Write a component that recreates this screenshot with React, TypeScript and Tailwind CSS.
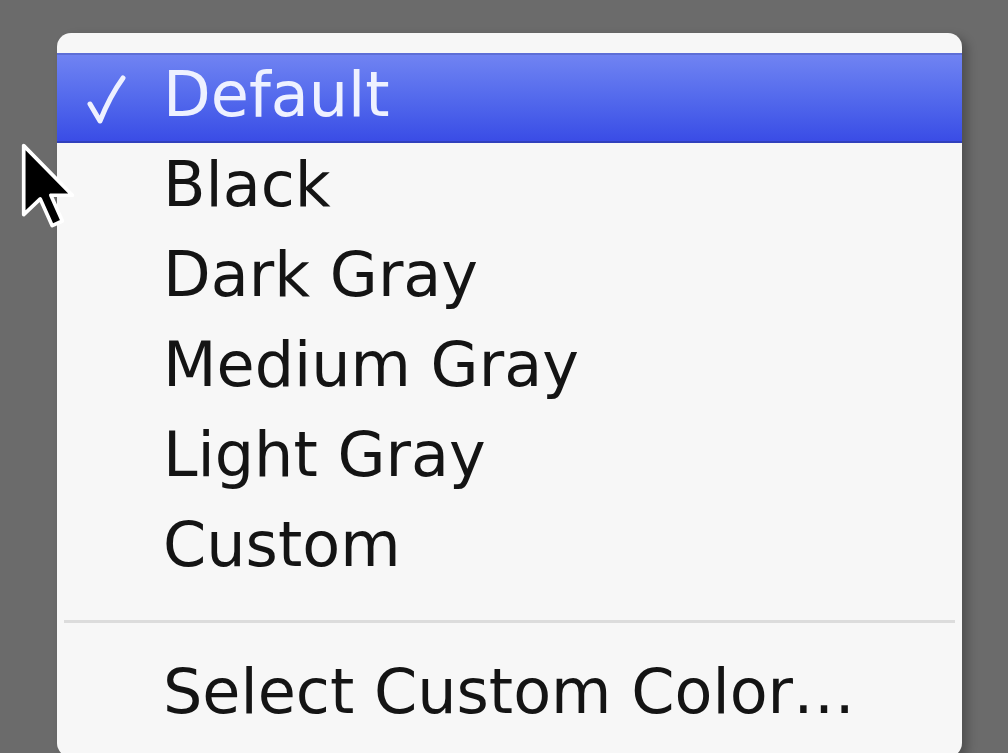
import React from 'react';

const items = ['Black', 'Dark Gray', 'Medium Gray', 'Light Gray', 'Custom'];

function ArrowCursor() {
    return (
        <svg
            className="absolute left-[19px] top-[141px]"
            width="60"
            height="92"
            viewBox="0 0 13 20"
        >
            <path
                d="M1 1 L1 16 L4.6 12.6 L7.2 18.4 L9.4 17.4 L6.9 11.8 L11.6 11.8 Z"
                fill="#000"
                stroke="#fff"
                strokeWidth="0.8"
                strokeLinejoin="round"
            />
        </svg>
    );
}

function CheckMark() {
    return (
        <svg width="40" height="54" viewBox="0 0 40 54" className="mt-[6px]">
            <path
                d="M4 30 L14 47 Q24 22 37 4"
                fill="none"
                stroke="#eef1ff"
                strokeWidth="5"
                strokeLinecap="round"
                strokeLinejoin="round"
            />
        </svg>
    );
}

export default function App() {
    return (
        <div
            className="relative w-[1008px] h-[753px] overflow-hidden bg-[#6b6b6b]"
            style={{ fontFamily: '"DejaVu Sans", "Liberation Sans", sans-serif' }}
        >
            <div className="absolute left-[57px] top-[33px] w-[905px] h-[724px] bg-[#f7f7f7] rounded-[14px] shadow-[6px_4px_10px_rgba(0,0,0,0.25)] pt-[20px]">
                {/* Selected row */}
                <div className="h-[90px] flex items-center bg-gradient-to-b from-[#7083f2] to-[#3a4ce6] border-t-2 border-t-[#5d6ed6] border-b-2 border-b-[#3140bc] text-[#eef1ff] text-[62px] leading-[86px]">
                    <div className="w-[106px] pl-[29px] flex items-center">
                        <CheckMark />
                    </div>
                    <span className="-mt-[6px]">Default</span>
                </div>

                {items.map((item) => (
                    <div
                        key={item}
                        className="h-[90px] flex items-center pl-[106px] text-[#141414] text-[62px] leading-[90px]"
                    >
                        <span className="-mt-[6px]">{item}</span>
                    </div>
                ))}

                {/* Separator */}
                <div className="h-[57px] flex items-center px-[7px]">
                    <div className="w-full h-[3px] bg-[#dcdcdc]" />
                </div>

                <div className="h-[90px] flex items-center pl-[106px] text-[#141414] text-[62px] leading-[90px]">
                    <span className="-mt-[6px]">Select Custom Color…</span>
                </div>
            </div>

            <ArrowCursor />
        </div>
    );
}
